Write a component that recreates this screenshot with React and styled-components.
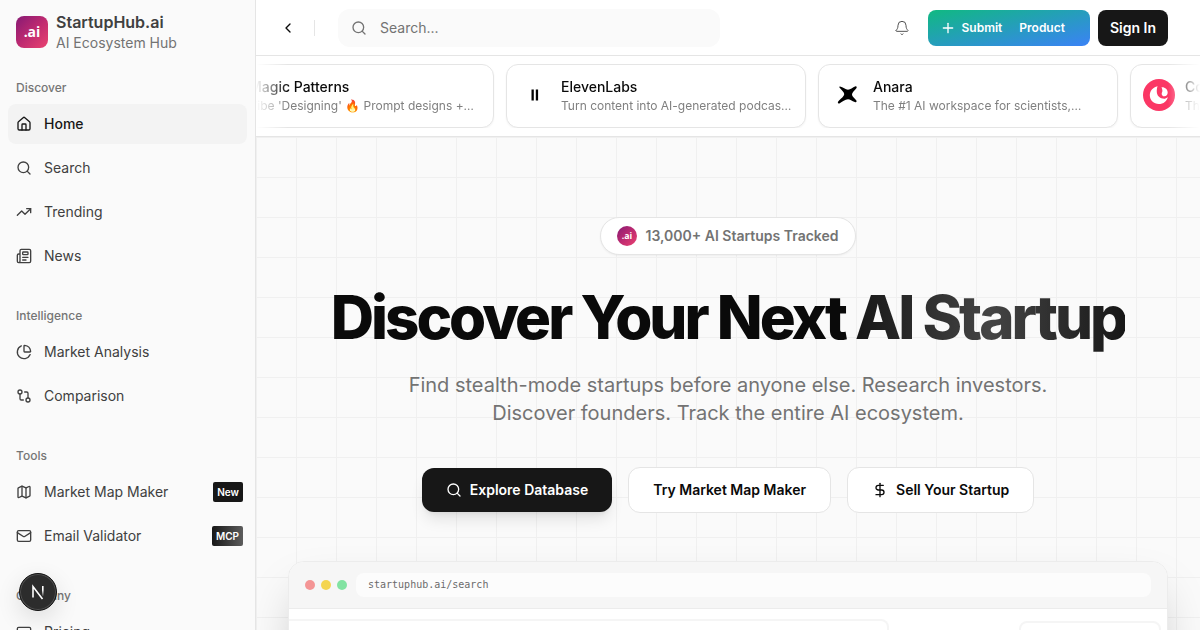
import React from "react";
import styled, { createGlobalStyle, css } from "styled-components";
import {
  House, Search, TrendingUp, Newspaper, ChartPie, GitCompare, Map, Mail,
  CreditCard, ChevronLeft, Bell, Plus, DollarSign,
} from "lucide-react";

const GlobalStyle = createGlobalStyle`
  *, *::before, *::after { box-sizing: border-box; }
  html { scrollbar-width: none; }
  body {
    margin: 0;
    background: #fff;
    color: #0a0a0a;
    font-family: Inter, "Liberation Sans", sans-serif;
    font-size: 14px;
    line-height: 20px;
  }
  button, input { font: inherit; color: inherit; }
  h1, h2, p, ul { margin: 0; padding: 0; }
  ul { list-style: none; }
  a { color: inherit; text-decoration: none; }
`;

const Shell = styled.div`
  display: grid;
  grid-template-columns: 256px minmax(0, 1fr);
  min-height: 100vh;
`;

const Sidebar = styled.aside`
  position: sticky;
  top: 0;
  height: 100vh;
  overflow-y: auto;
  scrollbar-width: none;
  background: #fafafa;
  border-right: 1px solid #e5e5e5;
  color: #404040;
`;

const Brand = styled.a`
  display: flex;
  align-items: center;
  gap: 8px;
  height: 64px;
  padding: 0 16px;
`;

const BrandText = styled.span`
  display: flex;
  flex-direction: column;
`;

const BrandName = styled.span`
  font-size: 16px;
  font-weight: 600;
  line-height: 22px;
`;

const BrandTagline = styled.span`
  color: #737373;
  line-height: 20px;
`;

const NavGroup = styled.section`
  padding: 8px 8px 16px;
`;

const NavLabel = styled.h2`
  display: flex;
  align-items: center;
  height: 32px;
  padding: 0 8px;
  color: #757575;
  font-size: 12px;
  font-weight: 500;
`;

const NavList = styled.ul`
  display: flex;
  flex-direction: column;
  gap: 4px;
`;

const NavLink = styled.a`
  display: flex;
  align-items: center;
  gap: 12px;
  height: 40px;
  padding: 0 4px 0 8px;
  border-radius: 8px;
  ${(p) => p.$active && css`
    background: #f3f3f3;
    color: #171717;
    font-weight: 500;
  `}
`;

const Tag = styled.span`
  margin-left: auto;
  padding: 0 4px;
  border-radius: 2px;
  background: ${(p) => (p.$fade ? "linear-gradient(90deg, #171717, #5c5c5c)" : "#171717")};
  color: #fff;
  font-size: 10px;
  font-weight: 600;
`;

const DevBadge = styled.button`
  position: fixed;
  left: 19px;
  bottom: 19px;
  display: grid;
  place-items: center;
  width: 38px;
  height: 38px;
  padding: 0;
  border: 1px solid #111;
  border-radius: 50%;
  background: #2c2c2c;
  box-shadow: inset 0 0 0 1px #505050, 0 8px 24px rgba(0, 0, 0, 0.12);
`;

const Main = styled.main`
  display: flex;
  flex-direction: column;
  min-width: 0;
`;

const TopBar = styled.header`
  display: flex;
  align-items: center;
  height: 56px;
  padding: 0 32px 0 16px;
  border-bottom: 1px solid #e5e5e5;
`;

const IconButton = styled.button`
  display: grid;
  place-items: center;
  width: 32px;
  height: 32px;
  padding: 0;
  border: 0;
  background: none;
  color: ${(p) => (p.$muted ? "#525252" : "#0a0a0a")};
`;

const Separator = styled.span`
  width: 1px;
  height: 16px;
  margin: 0 23px 0 10px;
  background: #e5e5e5;
`;

const SearchField = styled.label`
  display: flex;
  align-items: center;
  flex: 1;
  gap: 13px;
  max-width: 382px;
  height: 38px;
  padding: 0 13px;
  border-radius: 12px;
  background: #fafafa;
  color: #737373;
`;

const SearchInput = styled.input`
  flex: 1;
  min-width: 0;
  padding: 0;
  border: 0;
  outline: 0;
  background: none;
  &::placeholder { color: #737373; opacity: 1; }
`;

const Actions = styled.div`
  display: flex;
  align-items: center;
  gap: 8px;
  margin-left: auto;
`;

const SubmitButton = styled.button`
  display: flex;
  align-items: center;
  gap: 6px;
  height: 36px;
  margin-left: 2px;
  padding: 0 25px 0 12px;
  border: 0;
  border-radius: 8px;
  background: linear-gradient(to bottom right, #10b981, #3b82f6);
  color: #fff;
  font-size: 12px;
  font-weight: 600;
  span + span { margin-left: 11px; }
`;

const SignInButton = styled.button`
  height: 36px;
  padding: 0 12px;
  border: 0;
  border-radius: 8px;
  background: #171717;
  color: #fff;
  font-weight: 600;
`;

const Ticker = styled.section`
  display: flex;
  justify-content: center;
  padding: 8px 0;
  overflow: hidden;
  border-bottom: 1px solid #e5e5e5;
`;

const TickerViewport = styled.div`
  flex: 1;
  min-width: 0;
  overflow: hidden;
  mask-image: linear-gradient(90deg, transparent, #000 32px, #000 calc(100% - 32px), transparent);
`;

const TickerTrack = styled.div`
  display: flex;
  gap: 12px;
  width: max-content;
  margin-left: -62px;
`;

const StartupCard = styled.a`
  display: flex;
  align-items: center;
  gap: 10px;
  width: 300px;
  height: 64px;
  padding: 0 12px;
  border: 1px solid #e5e5e5;
  border-radius: 12px;
  background: #fff;
  box-shadow: 0 1px 2px rgba(0, 0, 0, 0.05);
`;

const CardLogo = styled.span`
  display: grid;
  flex: none;
  place-items: center;
  width: 32px;
  height: 32px;
  margin-bottom: 2px;
`;

const CardText = styled.span`
  display: flex;
  flex-direction: column;
  min-width: 0;
`;

const CardName = styled.span`
  font-weight: 500;
  line-height: 20px;
`;

const CardBlurb = styled.span`
  overflow: hidden;
  color: #808080;
  font-size: 12px;
  line-height: 18px;
  text-overflow: ellipsis;
  white-space: nowrap;
`;

const Hero = styled.section`
  display: flex;
  flex: 1;
  flex-direction: column;
  align-items: center;
  padding: 80px 32px;
  background-color: #fafafa;
  background-image:
    linear-gradient(to right, #f0f0f0 1px, transparent 1px),
    linear-gradient(to bottom, #f0f0f0 1px, transparent 1px);
  background-size: 40px 40px;
  text-align: center;
`;

const Pill = styled.div`
  display: flex;
  align-items: center;
  gap: 8px;
  height: 38px;
  padding: 0 16px;
  border: 1px solid #e5e5e5;
  border-radius: 19px;
  background: #fff;
  box-shadow: 0 1px 2px rgba(0, 0, 0, 0.05);
  color: #737373;
  font-weight: 600;
`;

const Headline = styled.h1`
  margin-top: 32px;
  font-size: 60px;
  font-weight: 800;
  line-height: 60px;
  letter-spacing: -0.05em;
`;

const HeadlineFade = styled.span`
  padding-bottom: 8px;
  background: linear-gradient(90deg, #171717, #444 50%, #171717);
  background-clip: text;
  -webkit-background-clip: text;
  color: transparent;
`;

const Lead = styled.p`
  max-width: 672px;
  margin-top: 24px;
  color: #737373;
  font-size: 20px;
  line-height: 28px;
`;

const CtaRow = styled.div`
  display: flex;
  flex-wrap: wrap;
  align-items: center;
  justify-content: center;
  gap: 16px;
  margin-top: 40px;
`;

const Cta = styled.button`
  display: flex;
  align-items: center;
  gap: 8px;
  padding: 12px 24px;
  border: 1px solid #e5e5e5;
  border-radius: 12px;
  background: #fff;
  font-weight: 600;
  ${(p) => p.$primary && css`
    border: 0;
    background: #171717;
    box-shadow: 0 10px 15px -3px rgba(0, 0, 0, 0.1), 0 4px 6px -4px rgba(0, 0, 0, 0.1);
    color: #fff;
  `}
`;

const Preview = styled.div`
  width: 100%;
  min-height: 400px;
  margin-top: 48px;
  overflow: hidden;
  border: 1px solid #ececec;
  border-radius: 16px;
  background: #fff;
  box-shadow: 0 25px 50px -12px rgba(0, 0, 0, 0.25);
  text-align: left;
`;

const PreviewBar = styled.div`
  display: flex;
  align-items: center;
  gap: 9px;
  height: 47px;
  padding: 0 16px;
  border-bottom: 1px solid #ececec;
  background: #f6f6f6;
`;

const Dots = styled.div`
  display: flex;
  gap: 6px;
`;

const Dot = styled.span`
  width: 10px;
  height: 10px;
  border-radius: 50%;
  background: ${(p) => p.$color};
`;

const Address = styled.div`
  flex: 1;
  height: 24px;
  padding: 0 12px;
  border-radius: 8px;
  background: #fcfcfc;
  color: #6b6b6b;
  font-family: "DejaVu Sans Mono", monospace;
  font-size: 10px;
  line-height: 24px;
`;

const PreviewBody = styled.div`
  display: flex;
  align-items: flex-start;
  justify-content: space-between;
  padding: 10px 6px 0 0;
`;

const Panel = styled.div`
  width: ${(p) => p.$width};
  height: 48px;
  border: 2px solid #f5f5f5;
  border-left-width: ${(p) => (p.$flush ? "0" : "2px")};
  border-radius: ${(p) => (p.$flush ? "0 8px 8px 0" : "8px")};
  margin-top: ${(p) => (p.$flush ? "0" : "2px")};
`;

function HubLogo({ size, radius, id }) {
  return (
    <svg width={size} height={size} viewBox="0 0 32 32" aria-hidden="true">
      <defs>
        <linearGradient id={id} x1="0" y1="0" x2="1" y2="1">
          <stop offset="0" stopColor="#861a74" />
          <stop offset="0.5" stopColor="#be2a70" />
          <stop offset="1" stopColor="#ea4270" />
        </linearGradient>
      </defs>
      <rect width="32" height="32" rx={radius} fill={`url(#${id})`} />
      <text x="16" y="21" textAnchor="middle" fill="#fff" fontFamily="Open Sans, sans-serif" fontSize="14" fontWeight="700">.ai</text>
    </svg>
  );
}

const ElevenLogo = () => (
  <svg width="32" height="32" viewBox="0 0 32 32" aria-hidden="true">
    <path d="M12.500 10.500h2.300v11h-2.300zM16.800 10.500h2.300v11h-2.300z" fill="#000" />
  </svg>
);

const AnaraLogo = () => (
  <svg width="32" height="32" viewBox="0 0 32 32" aria-hidden="true">
    <path
      d="M9 7.500C12 8 14.500 10.800 17 10.800C19.500 10.800 21.500 8.500 24.500 7.300C26 7.200 26 8.500 25.200 9.400C23 11.800 21 13.600 21 15.600C21 17.600 23.400 19.200 25.400 21.600C26 23 25 23.600 23.800 23C21 22 19 20.200 17 20.200C14 20.400 11.500 22.500 8.400 24.400C7 25 6.400 23.800 7.200 22.600C9.500 19.600 13.200 17.600 13.200 15C13.200 13 10.200 11 8.600 8.800C8.200 8 8.400 7.500 9 7.500Z"
      fill="#000"
    />
  </svg>
);

const CrescentLogo = () => (
  <svg width="32" height="32" viewBox="0 0 32 32" aria-hidden="true">
    <circle cx="16" cy="16" r="16" fill="#fb3765" />
    <path
      d="M14.600 7.200C9.800 8.200 6.800 12 6.800 16.300c0 5 4 8.700 9 8.700 4.700 0 8.300-3 9-7.100-1.300 1.500-3.300 2.100-5.200 1.700-3.400-.6-5.600-3.300-5.800-6.600-.1-2.300.1-4.200.8-5.800Z"
      fill="#fff"
    />
    <path d="M18.500 8.200c3.300-.4 6.200 2 6.200 5.200 0 2.200-1.400 3.900-3.300 3.900-1.700 0-2.800-1.300-2.700-2.900.1-1 .700-1.600.700-2.700 0-1.300-.4-2.400-.9-3.500Z" fill="#fff" />
  </svg>
);

const NextMark = () => (
  <svg width="14" height="16" viewBox="0 0 14 16" fill="none" aria-hidden="true">
    <defs>
      <linearGradient id="markFade" x1="0" y1="0" x2="0" y2="1">
        <stop offset="0.4" stopColor="#fff" />
        <stop offset="1" stopColor="#fff" stopOpacity="0.1" />
      </linearGradient>
    </defs>
    <path d="M2 13.500V2.500L11.500 15" stroke="#fff" strokeWidth="1.600" />
    <rect x="11" y="2" width="1.600" height="10" fill="url(#markFade)" />
  </svg>
);

const NAV = [
  { label: "Discover", items: [
    { icon: House, text: "Home", active: true },
    { icon: Search, text: "Search" },
    { icon: TrendingUp, text: "Trending" },
    { icon: Newspaper, text: "News" },
  ] },
  { label: "Intelligence", items: [
    { icon: ChartPie, text: "Market Analysis" },
    { icon: GitCompare, text: "Comparison" },
  ] },
  { label: "Tools", items: [
    { icon: Map, text: "Market Map Maker", tag: "New" },
    { icon: Mail, text: "Email Validator", tag: "MCP", fade: true },
  ] },
  { label: "Company", items: [{ icon: CreditCard, text: "Pricing" }] },
];

const STARTUPS = [
  { name: "Magic Patterns", blurb: "Vibe 'Designing' 🔥 Prompt designs +…", logo: null },
  { name: "ElevenLabs", blurb: "Turn content into AI-generated podcas…", logo: <ElevenLogo /> },
  { name: "Anara", blurb: "The #1 AI workspace for scientists,…", logo: <AnaraLogo /> },
  { name: "Copilot", blurb: "The money app", logo: <CrescentLogo /> },
];

export default function App() {
  return (
    <>
      <GlobalStyle />
      <Shell>
        <Sidebar>
          <Brand href="#">
            <HubLogo size={32} radius={8} id="brandFill" />
            <BrandText>
              <BrandName>StartupHub.ai</BrandName>
              <BrandTagline>AI Ecosystem Hub</BrandTagline>
            </BrandText>
          </Brand>
          <nav>
            {NAV.map((group) => (
              <NavGroup key={group.label}>
                <NavLabel>{group.label}</NavLabel>
                <NavList>
                  {group.items.map(({ icon: Icon, text, active, tag, fade }) => (
                    <li key={text}>
                      <NavLink href="#" $active={active}>
                        <Icon size={16} />
                        {text}
                        {tag && <Tag $fade={fade}>{tag}</Tag>}
                      </NavLink>
                    </li>
                  ))}
                </NavList>
              </NavGroup>
            ))}
          </nav>
        </Sidebar>

        <Main>
          <TopBar>
            <IconButton aria-label="Collapse sidebar"><ChevronLeft size={16} /></IconButton>
            <Separator />
            <SearchField>
              <Search size={16} />
              <SearchInput type="text" placeholder="Search..." aria-label="Search" />
            </SearchField>
            <Actions>
              <IconButton $muted aria-label="Notifications"><Bell size={16} strokeWidth={1.5} /></IconButton>
              <SubmitButton>
                <Plus size={16} />
                <span>Submit</span>
                <span>Product</span>
              </SubmitButton>
              <SignInButton>Sign In</SignInButton>
            </Actions>
          </TopBar>

          <Ticker>
            <TickerViewport>
              <TickerTrack>
                {STARTUPS.map((s) => (
                  <StartupCard href="#" key={s.name}>
                    <CardLogo>{s.logo}</CardLogo>
                    <CardText>
                      <CardName>{s.name}</CardName>
                      <CardBlurb>{s.blurb}</CardBlurb>
                    </CardText>
                  </StartupCard>
                ))}
              </TickerTrack>
            </TickerViewport>
          </Ticker>

          <Hero>
            <Pill>
              <HubLogo size={20} radius={16} id="pillFill" />
              13,000+ AI Startups Tracked
            </Pill>
            <Headline>
              Discover Your Next <HeadlineFade>AI Startup</HeadlineFade>
            </Headline>
            <Lead>
              Find stealth-mode startups before anyone else. Research investors.
              Discover founders. Track the entire AI ecosystem.
            </Lead>
            <CtaRow>
              <Cta $primary><Search size={16} />Explore Database</Cta>
              <Cta>Try Market Map Maker</Cta>
              <Cta><DollarSign size={16} />Sell Your Startup</Cta>
            </CtaRow>
            <Preview>
              <PreviewBar>
                <Dots>
                  <Dot $color="#f49595" />
                  <Dot $color="#f4d551" />
                  <Dot $color="#82e3a2" />
                </Dots>
                <Address>startuphub.ai/search</Address>
              </PreviewBar>
              <PreviewBody>
                <Panel $width="600px" $flush />
                <Panel $width="142px" />
              </PreviewBody>
            </Preview>
          </Hero>
        </Main>
      </Shell>
      <DevBadge aria-label="Developer tools"><NextMark /></DevBadge>
    </>
  );
}
